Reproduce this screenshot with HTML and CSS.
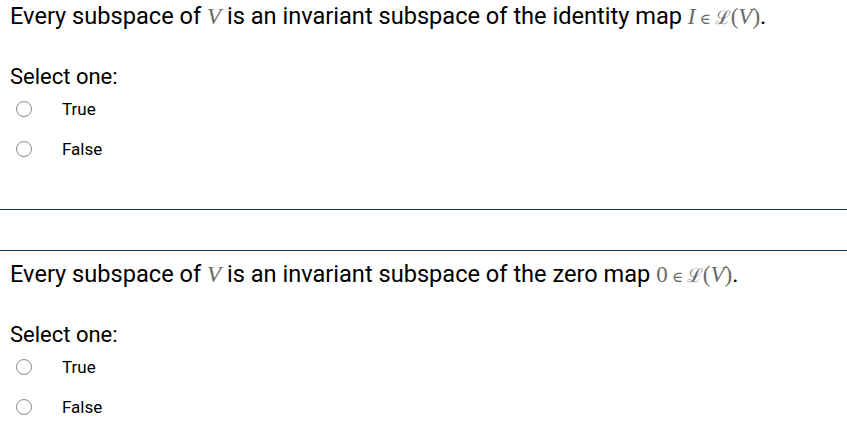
FILE: index.html
```html
<!DOCTYPE html>
<html>
<head>
<meta charset="utf-8">
<link rel="stylesheet" href="styles.css">
</head>
<body>
<div class="quiz">
  <div class="que">
    <div class="qtext">Every subspace of <span class="math"><i>V</i></span> is an invariant subspace of the identity map <span class="math"><i>I</i><span class="op">∈</span><span class="cal">ℒ</span>(<i>V</i>)</span>.</div>
    <div class="prompt">Select one:</div>
    <div class="answer">
      <label class="opt"><span class="radio"></span><span class="lbl">True</span></label>
      <label class="opt"><span class="radio"></span><span class="lbl">False</span></label>
    </div>
  </div>
  <div class="que">
    <div class="qtext">Every subspace of <span class="math"><i>V</i></span> is an invariant subspace of the zero map <span class="math">0<span class="op">∈</span><span class="cal">ℒ</span>(<i>V</i>)</span>.</div>
    <div class="prompt">Select one:</div>
    <div class="answer">
      <label class="opt"><span class="radio"></span><span class="lbl">True</span></label>
      <label class="opt"><span class="radio"></span><span class="lbl">False</span></label>
    </div>
  </div>
</div>
</body>
</html>
```
FILE: styles.css
```css
html, body {
  margin: 0;
  padding: 0;
  background: #fff;
}
body {
  font-family: Roboto, "Liberation Sans", sans-serif;
  color: #000;
  overflow: hidden;
}
.quiz {
  margin-top: -8px;
}
.que {
  border-top: 1px solid #0b3a5e;
  border-bottom: 1px solid #0b3a5e;
  padding: 8px 10px 40px;
  margin-bottom: 40px;
}
.qtext {
  font-size: 23.6px;
  line-height: 30px;
  height: 30px;
  white-space: nowrap;
}
.math {
  font-family: "Liberation Serif", "DejaVu Serif", serif;
  color: #6a6a6a;
  font-size: 23px;
  line-height: 30px;
}
.math i {
  font-style: italic;
}
.math .op {
  font-family: "DejaVu Serif", serif;
  font-size: 15px;
  margin: 0 4px;
}
.math .cal {
  font-family: "DejaVu Serif", serif;
  font-size: 19px;
}
.prompt {
  margin-top: 34px;
  font-size: 22px;
  line-height: 24px;
}
.answer {
  display: flex;
  flex-direction: column;
}
.opt {
  display: flex;
  align-items: center;
  height: 40px;
}
.radio {
  box-sizing: border-box;
  width: 16px;
  height: 16px;
  border: 1px solid #8a8a8a;
  border-radius: 50%;
  margin-left: 6px;
  margin-right: 30px;
  flex: none;
}
.lbl {
  font-size: 17px;
}
```
